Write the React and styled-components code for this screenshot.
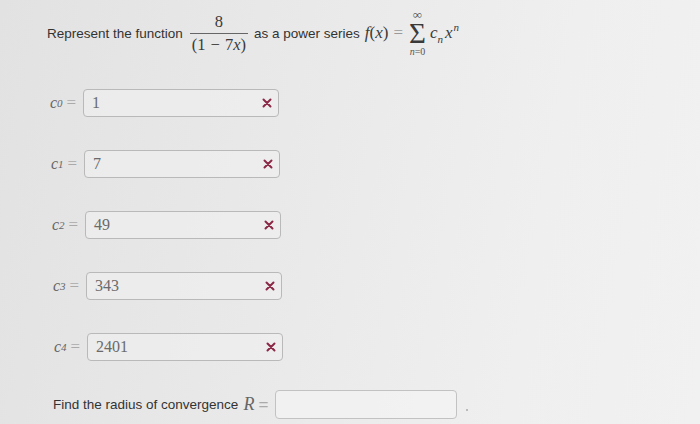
import React from 'react';
import styled, { createGlobalStyle } from 'styled-components';

const Global = createGlobalStyle`
  html, body { margin: 0; padding: 0; }
  body {
    width: 700px;
    height: 424px;
    overflow: hidden;
    font-family: "Liberation Sans", Arial, sans-serif;
  }
`;

const Page = styled.div`
  width: 700px;
  height: 424px;
  box-sizing: border-box;
  padding: 10px 0 0 47px;
  background: linear-gradient(100deg, #e2e2e2 0%, #e9e9e9 40%, #efefef 75%, #f1f1f1 100%);
  color: #333;
`;

const Prompt = styled.div`
  display: flex;
  align-items: center;
  font-size: 13.5px;
  height: 46px;
  gap: 5px;
`;

const Serif = styled.span`
  font-family: "Liberation Serif", "Times New Roman", serif;
  font-size: 17px;
  display: inline-flex;
  align-items: center;
  color: #3a3a3a;
`;

const Frac = styled(Serif)`
  flex-direction: column;
  margin: 0 1px 0 2px;
  font-size: 16.5px;
`;

const Num = styled.span`
  padding: 0 4px 3px;
  border-bottom: 1px solid #666;
  align-self: stretch;
  text-align: center;
  line-height: 17px;
`;

const Den = styled.span`
  padding: 2px 2px 0;
  line-height: 17px;
`;

const Var = styled.i`
  font-style: italic;
`;

const Op = styled.span`
  margin: 0 ${p => p.$gap || 4}px;
  color: ${p => p.$light ? '#9a9a9a' : 'inherit'};
`;

const Sum = styled.span`
  display: inline-flex;
  flex-direction: column;
  align-items: center;
  margin: 0 4px 0 1px;
`;

const Limit = styled.span`
  font-size: ${p => p.$big ? 13 : 10}px;
  line-height: 11px;
  color: #555;
`;

const Sigma = styled.span`
  font-size: 29px;
  line-height: 26px;
`;

const Sub = styled.sub`
  font-size: 11px;
  margin-right: ${p => p.$after || 0}px;
`;

const Sup = styled.sup`
  font-size: 11px;
  margin-left: 1px;
`;

const Rows = styled.div`
  display: flex;
  flex-direction: column;
  gap: 33px;
  margin-top: 33px;
`;

const Row = styled.div`
  display: flex;
  align-items: center;
  padding-left: ${p => p.$shift}px;
`;

const Label = styled.span`
  width: 36px;
  font-family: "Liberation Serif", "Times New Roman", serif;
  font-style: italic;
  font-size: 16px;
  color: #666;
  display: flex;
  align-items: center;
  padding-left: 3px;
  box-sizing: border-box;
`;

const Eq = styled.span`
  font-style: normal;
  color: #aaa;
  margin-left: 4px;
  font-size: 17px;
`;

const Field = styled.div`
  width: 196px;
  height: 28px;
  box-sizing: border-box;
  border: 1px solid #b9b9b9;
  border-radius: 4px;
  background: rgba(240, 240, 240, 0.6);
  display: flex;
  align-items: center;
  justify-content: space-between;
  padding: 0 6px 0 8px;
  font-family: "Liberation Serif", "Times New Roman", serif;
  font-size: 16px;
  color: #6a6a6a;
`;

const Cross = styled.svg`
  width: 10px;
  height: 10px;
`;

const Footer = styled.div`
  display: flex;
  align-items: center;
  margin-top: 29px;
  padding-left: 6px;
  font-size: 13.5px;
  color: #333;
`;

const RVar = styled.i`
  font-family: "Liberation Serif", "Times New Roman", serif;
  font-size: 18px;
  color: #666;
  margin-left: 5px;
`;

const Blank = styled.div`
  width: 182px;
  height: 29px;
  box-sizing: border-box;
  border: 1px solid #c2c2c2;
  border-radius: 4px;
  background: rgba(245, 245, 245, 0.6);
  margin-left: 7px;
`;

const Dot = styled.span`
  width: 2px;
  height: 2px;
  background: #bbb;
  margin: 10px 0 0 9px;
`;

const values = ['1', '7', '49', '343', '2401'];

function X() {
  return (
    <Cross viewBox="0 0 10 10">
      <path d="M1.5 1.5 L8.5 8.5 M8.5 1.5 L1.5 8.5" stroke="#8a2846" strokeWidth="2" strokeLinecap="round" />
    </Cross>
  );
}

export default function App() {
  return (
    <>
      <Global />
      <Page>
        <Prompt>
          <span>Represent the function</span>
          <Frac>
            <Num>8</Num>
            <Den>(1<Op $gap={5}>−</Op>7<Var>x</Var>)</Den>
          </Frac>
          <span>as a power series</span>
          <Serif>
            <Var>f</Var>(<Var>x</Var>)<Op $light $gap={5}>=</Op>
            <Sum>
              <Limit $big>∞</Limit>
              <Sigma>Σ</Sigma>
              <Limit><Var>n</Var>=0</Limit>
            </Sum>
            <Var>c<Sub $after={2}>n</Sub>x<Sup>n</Sup></Var>
          </Serif>
        </Prompt>
        <Rows>
          {values.map((v, i) => (
            <Row key={i} $shift={i}>
              <Label>c<Sub>{i}</Sub><Eq>=</Eq></Label>
              <Field>
                <span>{v}</span>
                <X />
              </Field>
            </Row>
          ))}
        </Rows>
        <Footer>
          <span>Find the radius of convergence</span>
          <RVar>R</RVar>
          <Eq>=</Eq>
          <Blank />
          <Dot />
        </Footer>
      </Page>
    </>
  );
}
